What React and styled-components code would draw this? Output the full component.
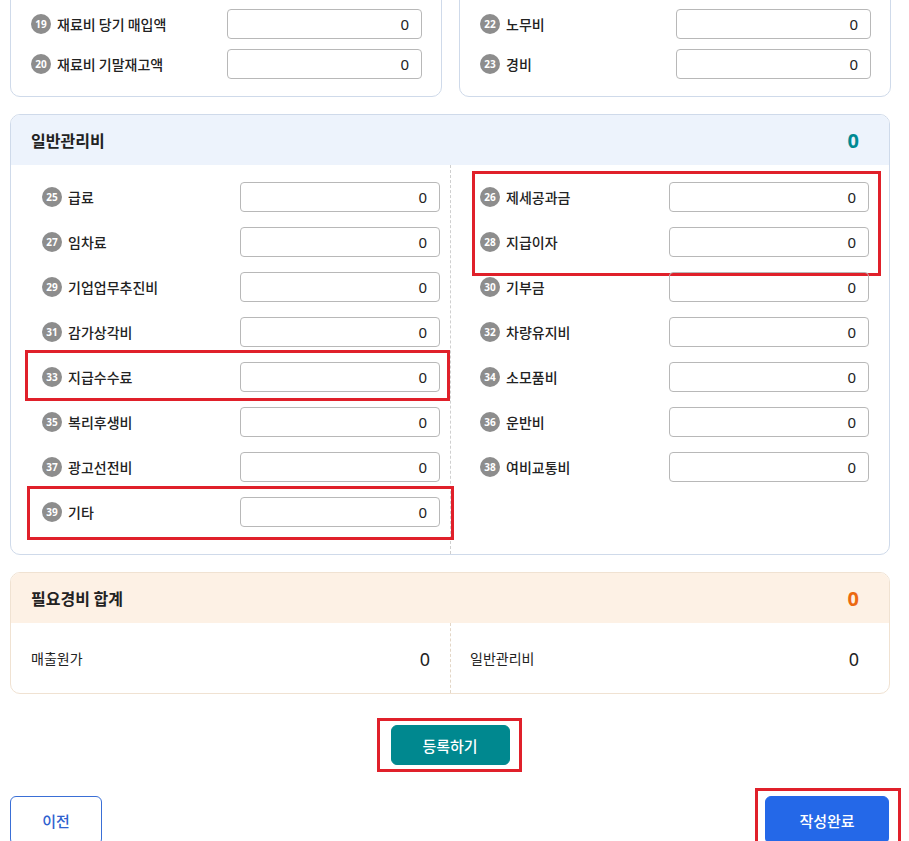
import React from "react";
import styled, { createGlobalStyle } from "styled-components";

const Global = createGlobalStyle`
  body { margin: 0; background: #fff; font-family: "Noto Sans CJK KR", "Noto Sans", sans-serif; color: #222; }
`;

const Page = styled.div`
  width: 909px;
  padding: 0 19px 0 10px;
  box-sizing: border-box;
`;

const TopGrid = styled.div`
  display: grid;
  grid-template-columns: 432px 432px;
  gap: 17px;
  margin-top: -20px;
`;

const Card = styled.div`
  border: 1px solid ${(p) => p.$border || "#cfdaea"};
  border-radius: 10px;
  background: #fff;
  overflow: hidden;
`;

const TopCard = styled(Card)`
  padding: 28px 19px 17px 20px;
  display: flex;
  flex-direction: column;
  gap: 10px;
`;

const Header = styled.div`
  height: 50px;
  background: ${(p) => p.$bg};
  display: flex;
  align-items: center;
  justify-content: space-between;
  padding: 0 30px 0 20px;
  font-size: 16px;
  font-weight: 700;
`;

const HeaderValue = styled.span`
  color: ${(p) => p.$color};
  font-size: 20px;
  font-family: "Noto Sans", sans-serif;
`;

const Body = styled.div`
  display: grid;
  grid-template-columns: 1fr 1fr;
`;

const Col = styled.div`
  padding: ${(p) => p.$pad};
  display: flex;
  flex-direction: column;
  gap: 15px;
  border-left: ${(p) => (p.$divider ? "1px dashed #cfcfcf" : "none")};
`;

const Row = styled.div`
  position: relative;
  display: flex;
  align-items: center;
  height: 30px;
`;

const Mark = styled.div`
  position: absolute;
  left: ${(p) => p.$l}px;
  right: ${(p) => p.$r}px;
  top: ${(p) => p.$t}px;
  bottom: ${(p) => p.$b}px;
  border: 3px solid #e0202a;
  pointer-events: none;
`;

const Badge = styled.span`
  width: 20px;
  height: 20px;
  border-radius: 50%;
  background: #8d8d8d;
  color: #fff;
  font-size: 10px;
  font-weight: 700;
  font-family: "Noto Sans", sans-serif;
  display: inline-flex;
  align-items: center;
  justify-content: center;
  margin-right: 6px;
  flex-shrink: 0;
`;

const Label = styled.span`
  font-size: 14px;
  font-weight: 500;
  flex: 1;
`;

const Input = styled.div`
  width: ${(p) => p.$w || 200}px;
  height: 30px;
  box-sizing: border-box;
  border: 1px solid #b8b8b8;
  border-radius: 4px;
  display: flex;
  align-items: center;
  justify-content: flex-end;
  padding-right: 12px;
  font-size: 15px;
  font-family: "Noto Sans", sans-serif;
`;

const SumCol = styled.div`
  height: 70px;
  display: flex;
  align-items: center;
  justify-content: space-between;
  padding: 0 ${(p) => p.$pr}px 0 ${(p) => p.$pl}px;
  border-left: ${(p) => (p.$divider ? "1px dashed #e3d6c6" : "none")};
  font-size: 14px;
`;

const SumValue = styled.span`
  font-size: 18px;
  font-family: "Noto Sans", sans-serif;
  margin-top: 2px;
`;

const Center = styled.div`
  display: flex;
  justify-content: center;
  margin-top: 31px;
`;

const Btn = styled.button`
  position: relative;
  height: ${(p) => p.$h}px;
  width: ${(p) => p.$w}px;
  border-radius: 6px;
  border: 1px solid ${(p) => p.$border};
  background: ${(p) => p.$bg};
  color: ${(p) => p.$color};
  font-family: "Noto Sans CJK KR", sans-serif;
  font-size: 15px;
  font-weight: 500;
`;

const Footer = styled.div`
  display: flex;
  justify-content: space-between;
  margin-top: 31px;
  padding-right: 1px;
`;

const Field = ({ n, label, w, mark }) => (
  <Row>
    {mark && <Mark {...mark} />}
    <Badge>{n}</Badge>
    <Label>{label}</Label>
    <Input $w={w}>0</Input>
  </Row>
);

const left = [
  [25, "급료"], [27, "임차료"], [29, "기업업무추진비"], [31, "감가상각비"],
  [33, "지급수수료", { $l: -17, $r: -10, $t: -12, $b: -9 }],
  [35, "복리후생비"], [37, "광고선전비"],
  [39, "기타", { $l: -15, $r: -14, $t: -11, $b: -13 }],
];
const right = [[26, "제세공과금"], [28, "지급이자"], [30, "기부금"], [32, "차량유지비"], [34, "소모품비"], [36, "운반비"], [38, "여비교통비"]];

export default function App() {
  return (
    <Page>
      <Global />
      <TopGrid>
        <TopCard>
          <Field n={19} label="재료비 당기 매입액" w={195} />
          <Field n={20} label="재료비 기말재고액" w={195} />
        </TopCard>
        <TopCard>
          <Field n={22} label="노무비" w={195} />
          <Field n={23} label="경비" w={195} />
        </TopCard>
      </TopGrid>

      <Card style={{ marginTop: 17 }}>
        <Header $bg="#edf3fc">
          일반관리비 <HeaderValue $color="#008a93">0</HeaderValue>
        </Header>
        <Body>
          <Col $pad="17px 10px 27px 31px">
            {left.map(([n, l, m]) => <Field key={n} n={n} label={l} mark={m} />)}
          </Col>
          <Col $pad="17px 20px 27px 29px" $divider>
            <Row>
              <Mark $l={-8} $r={-12} $t={-11} $b={-64} />
              <Badge>26</Badge>
              <Label>제세공과금</Label>
              <Input>0</Input>
            </Row>
            {right.slice(1).map(([n, l]) => <Field key={n} n={n} label={l} />)}
          </Col>
        </Body>
      </Card>

      <Card $border="#f0e2d2" style={{ marginTop: 17 }}>
        <Header $bg="#fdf1e5">
          필요경비 합계 <HeaderValue $color="#ec6a12">0</HeaderValue>
        </Header>
        <Body>
          <SumCol $pl={20} $pr={20}>매출원가<SumValue>0</SumValue></SumCol>
          <SumCol $pl={19} $pr={30} $divider>일반관리비<SumValue>0</SumValue></SumCol>
        </Body>
      </Card>

      <Center>
        <Btn $w={119} $h={40} $bg="#00888f" $border="#00888f" $color="#fff">
          <Mark $l={-15} $r={-13} $t={-8} $b={-8} />
          등록하기
        </Btn>
      </Center>

      <Footer>
        <Btn $w={92} $h={49} $bg="#fff" $border="#3a6fd6" $color="#2f62cf">이전</Btn>
        <Btn $w={124} $h={48} $bg="#2468e8" $border="#2468e8" $color="#fff">
          <Mark $l={-11} $r={-13} $t={-9} $b={-7} />
          작성완료
        </Btn>
      </Footer>
    </Page>
  );
}
